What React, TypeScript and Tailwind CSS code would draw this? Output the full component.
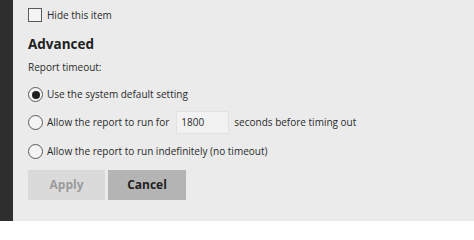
import React from "react";

function Radio({ checked }: { checked?: boolean }) {
  return (
    <span className="flex h-[15px] w-[15px] shrink-0 items-center justify-center rounded-full border border-[#5a5a5a] bg-[#f4f4f4]">
      {checked && <span className="h-[8px] w-[8px] rounded-full bg-[#1f1f1f]" />}
    </span>
  );
}

export default function App() {
  return (
    <div
      className="flex h-[221px] w-[474px] overflow-hidden bg-[#ebebeb] text-[#2a2a2a]"
      style={{ fontFamily: '"Open Sans", "Noto Sans", sans-serif' }}
    >
      <div className="w-[13px] shrink-0 bg-[#2e2e2e]" />
      <div className="flex flex-1 flex-col pl-[15px]">
        <div className="mt-[8px] flex h-[14px] items-center gap-[5px]">
          <span className="h-[14px] w-[14px] shrink-0 border border-[#5a5a5a] bg-[#f4f4f4]" />
          <span className="text-[10px] leading-[14px]">Hide this item</span>
        </div>
        <div className="mt-[13px] text-[13.5px] font-bold leading-[18px] text-[#1f1f1f]">Advanced</div>
        <div className="mt-[7px] text-[10px] leading-[14px]">Report timeout:</div>
        <div className="mt-[9px] flex h-[23px] items-center gap-[4px]">
          <Radio checked />
          <span className="text-[10px]">Use the system default setting</span>
        </div>
        <div className="mt-[5px] flex h-[23px] items-center gap-[4px]">
          <Radio />
          <span className="text-[10px]">Allow the report to run for</span>
          <span className="ml-[3px] flex h-[23px] w-[53px] items-center border border-[#e2e2e2] bg-[#f2f2f2] pl-[4px] text-[10px]">
            1800
          </span>
          <span className="ml-[1px] text-[10px]">seconds before timing out</span>
        </div>
        <div className="mt-[6px] flex h-[23px] items-center gap-[4px]">
          <Radio />
          <span className="text-[10px]">Allow the report to run indefinitely (no timeout)</span>
        </div>
        <div className="mt-[7px] flex gap-[3px]">
          <button className="h-[30px] w-[77px] bg-[#dadada] text-[12px] font-bold text-[#9a9a9a]">Apply</button>
          <button className="h-[30px] w-[78px] bg-[#b4b4b4] text-[12px] font-bold text-[#1f1f1f]">Cancel</button>
        </div>
      </div>
    </div>
  );
}
